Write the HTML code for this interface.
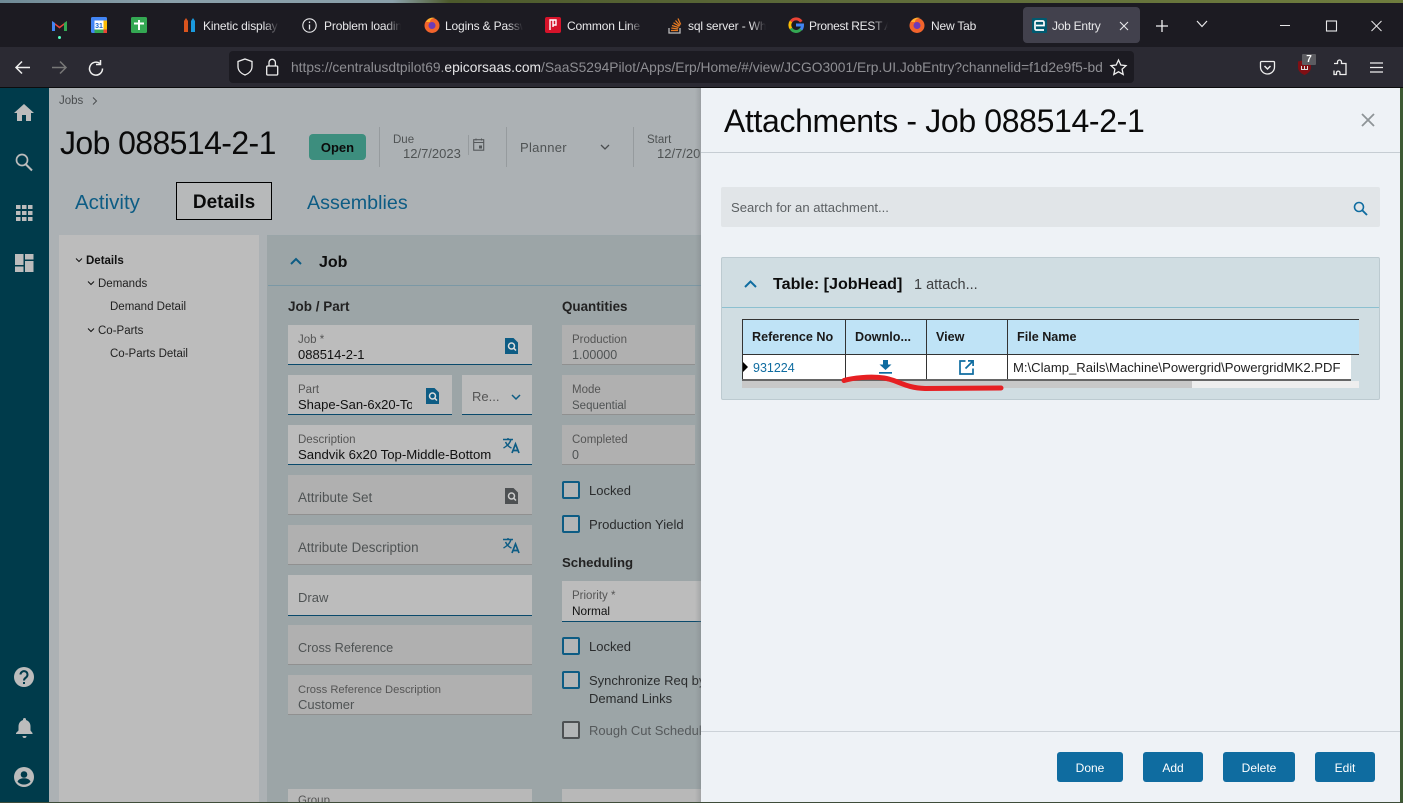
<!DOCTYPE html>
<html><head><meta charset="utf-8"><style>
html,body{margin:0;padding:0;width:1403px;height:803px;overflow:hidden;background:#3a4a30;font-family:"Liberation Sans",sans-serif}
.b{position:absolute}
.t{position:absolute;white-space:nowrap;line-height:16px;font-size:13px}
.f{position:absolute;background:#bcbcbc;border-bottom:1px solid #0a4a6c;box-sizing:border-box}
.d{position:absolute;background:#b0b0b0;border-bottom:1px solid #909090;box-sizing:border-box}
.l{color:#555;font-size:11.500px;margin-top:1px}
.g{color:#4f5354}
.c{position:absolute;width:14px;height:14px;border:2px solid #0d5c84;border-radius:2px;background:#b2b5b6}
.tab{color:#e8e8ea;font-size:12px;overflow:hidden;height:16px;letter-spacing:-.15px;-webkit-mask-image:linear-gradient(90deg,#000 80%,transparent);mask-image:linear-gradient(90deg,#000 80%,transparent)}
.btn{position:absolute;top:752px;height:30px;background:#0f6ca0;border-radius:3px;color:#fff;font-size:12px;line-height:32px;text-align:center}
svg{position:absolute;overflow:visible}
.h{position:absolute;top:320px;height:34px;background:#bfe3f6;font-weight:bold;font-size:12.600px;line-height:35px;color:#1a1a1a;box-sizing:border-box;padding-left:9px;white-space:nowrap}
</style></head><body>
<!-- wallpaper -->
<div class="b" style="left:0;top:0;width:1403px;height:3px;background:linear-gradient(90deg,#6f8a96 0,#8aa0aa 12%,#8aa0aa 28%,#4d5a2c 32%,#5d6a3a 60%,#6f7d3e 100%)"></div>
<div class="b" style="left:1400px;top:88px;width:3px;height:715px;background:#3e5a34"></div>
<div class="b" style="left:0;top:802px;width:1403px;height:1px;background:#3f4d3a"></div>
<!-- tab bar -->
<div class="b" style="left:0;top:3px;width:1403px;height:44px;background:#1c1b22"></div>
<div class="b" style="left:0;top:47px;width:1403px;height:40px;background:#2b2a33"></div>
<div class="b" style="left:0;top:87px;width:1403px;height:1px;background:#0c0c0e"></div>
<div class="b" style="left:1023px;top:7px;width:117px;height:36px;background:#42414d;border-radius:4px"></div>
<!-- tab icons -->
<svg style="left:52px;top:20px" width="15" height="11" viewBox="0 0 15 11"><path d="M0 11V1l7.500 5.500L15 1v10h-3V5L7.500 8.500 3 5v6z" fill="#e8453c"/><path d="M0 11V1l3 2v8z" fill="#4285f4"/><path d="M15 11V1l-3 2v8z" fill="#34a853"/></svg>
<div class="b" style="left:58px;top:36px;width:3px;height:3px;border-radius:50%;background:#54ffbd"></div>
<svg style="left:91px;top:17px" width="16" height="16"><rect width="16" height="16" rx="1.500" fill="#4285f4"/><rect x="3.500" y="3.500" width="9" height="9" fill="#fff"/><rect x="12.500" y="3.500" width="3.500" height="9" fill="#fbbc04"/><rect x="3.500" y="12.500" width="9" height="3.500" fill="#34a853"/><rect x="12.500" y="12.500" width="3.500" height="3.500" fill="#ea4335"/><text x="8" y="11" font-size="7" font-weight="bold" fill="#1967d2" text-anchor="middle" font-family="Liberation Sans">31</text></svg>
<svg style="left:131px;top:17px" width="16" height="16"><rect width="16" height="16" rx="1.500" fill="#34a853"/><path d="M8 3v10M3 6.500h10" stroke="#fff" stroke-width="2"/></svg>
<svg style="left:183px;top:17px" width="14" height="17"><path d="M1 4l2-3 2 3v11H1z" fill="#d9541e"/><path d="M8 4l2-3 2 3v11H8z" fill="#1a9ade"/></svg>
<div class="t tab" style="left:203px;top:18px;width:76px">Kinetic display</div>
<svg style="left:302px;top:18px" width="15" height="15"><circle cx="7.500" cy="7.500" r="6.700" fill="none" stroke="#e8e8ea" stroke-width="1.100"/><path d="M7.500 6.500v5M7.500 3.500v1.500" stroke="#e8e8ea" stroke-width="1.300"/></svg>
<div class="t tab" style="left:324px;top:18px;width:77px">Problem loading</div>
<svg style="left:424px;top:17px" width="16" height="16"><circle cx="8" cy="8.500" r="7.500" fill="#f2642c"/><path d="M2 5C4 1 8 0 11 1 8 1 6 3 6 5" fill="#ffb02e"/><circle cx="8" cy="8.500" r="3.500" fill="#6d3bb8"/></svg>
<div class="t tab" style="left:445px;top:18px;width:78px">Logins &amp; Passw</div>
<svg style="left:545px;top:17px" width="16" height="16"><rect width="16" height="16" rx="2" fill="#d6132a"/><path d="M5 13V3h6v5H8M8 3v7" fill="none" stroke="#fff" stroke-width="1.400"/></svg>
<div class="t tab" style="left:567px;top:18px;width:76px">Common Line</div>
<svg style="left:668px;top:17px" width="14" height="17"><path d="M1 11v5h11v-5" fill="none" stroke="#bbb" stroke-width="1.300"/><path d="M3 13.500h7M3.300 11l6.800 1M4 8.500l6.500 2M5.500 5.800l6 3.500M7.500 3.500l4.500 5M10 1.500l2.700 6" stroke="#e67a22" stroke-width="1.300"/></svg>
<div class="t tab" style="left:688px;top:18px;width:78px">sql server - Wh</div>
<svg style="left:788px;top:17px" width="16" height="16" viewBox="0 0 16 16"><path d="M13.300 4.800A6 6 0 0 0 3 4.700" fill="none" stroke="#ea4335" stroke-width="3"/><path d="M3 4.500A6 6 0 0 0 3 11.500" fill="none" stroke="#fbbc05" stroke-width="3"/><path d="M3 11.500A6 6 0 0 0 13 12" fill="none" stroke="#34a853" stroke-width="3"/><path d="M8 8h6.500c0 2-.5 3.500-1.500 4.500" fill="none" stroke="#4285f4" stroke-width="3"/></svg>
<div class="t tab" style="left:809px;top:18px;width:79px;letter-spacing:-.3px">Pronest REST A</div>
<svg style="left:909px;top:17px" width="16" height="16"><circle cx="8" cy="8.500" r="7.500" fill="#f2642c"/><path d="M2 5C4 1 8 0 11 1 8 1 6 3 6 5" fill="#ffb02e"/><circle cx="8" cy="8.500" r="3.500" fill="#6d3bb8"/></svg>
<div class="t" style="left:931px;top:18px;color:#e8e8ea;font-size:12px;letter-spacing:-.2px">New Tab</div>
<div class="b" style="left:1032px;top:18px;width:15px;height:15px;background:#005a70;border-radius:1px"></div>
<svg style="left:1034px;top:20px" width="11" height="11"><path d="M10 10H2.500Q1 10 1 8.500V2.500Q1 1 2.500 1H8.500Q10 1 10 2.500V5.500H2" fill="none" stroke="#fff" stroke-width="1.700"/></svg>
<div class="t" style="left:1052px;top:18px;color:#e8e8ea;font-size:12px;letter-spacing:-.25px">Job Entry</div>
<svg style="left:1119px;top:21px" width="10" height="10"><path d="M1 1l8 8M9 1l-8 8" stroke="#e8e8ea" stroke-width="1.100"/></svg>
<svg style="left:1156px;top:20px" width="12" height="12"><path d="M6 0v12M0 6h12" stroke="#f0f0f2" stroke-width="1.300"/></svg>
<svg style="left:1196px;top:20px" width="12" height="8"><path d="M1 1l5 5.500L11 1" fill="none" stroke="#e8e8ea" stroke-width="1.200"/></svg>
<svg style="left:1280px;top:20px" width="103" height="12"><path d="M0 5.500h10" stroke="#e8e8ea"/><rect x="46.500" y="1" width="10" height="10" fill="none" stroke="#e8e8ea" stroke-width="1.100"/><path d="M91.500 1l10 10M101.500 1l-10 10" stroke="#e8e8ea"/></svg>
<!-- toolbar -->
<div class="b" style="left:229px;top:51px;width:905px;height:32px;background:#1c1b22;border-radius:4px"></div>
<svg style="left:15px;top:60px" width="90" height="16" fill="none"><path d="M1 7.500h14M7 1.500l-6 6 6 6" stroke="#eee" stroke-width="1.500"/><path d="M37 7.500h14M45 1.500l6 6-6 6" stroke="#777" stroke-width="1.500"/><path d="M85 3.500a6.500 6.500 0 1 0 2.500 5" stroke="#eee" stroke-width="1.500"/><path d="M85.500 0v4.500h-4.500" stroke="#eee" stroke-width="1.500"/></svg>
<svg style="left:237px;top:58px" width="44" height="18" fill="none"><path d="M8 1l7 2.500v5c0 4-3 7-7 8.500-4-1.500-7-4.500-7-8.500v-5z" stroke="#eee" stroke-width="1.300"/><rect x="29.700" y="8" width="11" height="9" rx="1" stroke="#eee" stroke-width="1.300"/><path d="M32 8V4.500a3.200 3.200 0 0 1 6.400 0V8" stroke="#eee" stroke-width="1.300"/></svg>
<div class="t" style="left:291px;top:60px;font-size:13.800px;color:#8e8e93;width:812px;overflow:hidden">https://centralusdtpilot69.<span style="color:#e6e6e8">epicorsaas.com</span>/SaaS5294Pilot/Apps/Erp/Home/#/view/JCGO3001/Erp.UI.JobEntry?channelid=f1d2e9f5-bd</div>
<svg style="left:1110px;top:59px" width="17" height="17"><path d="M8.500 1l2.300 5 5.200.6-3.900 3.600 1.100 5.300-4.700-2.700-4.700 2.700 1.100-5.300L1 6.600 6.200 6z" fill="none" stroke="#eee" stroke-width="1.300"/></svg>
<svg style="left:1260px;top:60px" width="15" height="15"><path d="M1.500 1.500h12a1 1 0 0 1 1 1V7a7 7 0 0 1-14 0V2.500a1 1 0 0 1 1-1z" fill="none" stroke="#eee" stroke-width="1.300"/><path d="M4.500 6l3 3 3-3" fill="none" stroke="#eee" stroke-width="1.500"/></svg>
<svg style="left:1298px;top:60px" width="13" height="15"><path d="M0 1.500L6.500 0 13 1.500v6c0 3.500-3 6-6.500 7.500C3 13.500 0 11 0 7.500z" fill="#800f14"/><path d="M3.500 6v3.500h6V6M6.500 6v3.500" fill="none" stroke="#ddd"/></svg>
<div class="b" style="left:1302px;top:54px;width:14px;height:11px;background:#5c5c61;border-radius:1px;color:#fff;font-size:10px;font-weight:bold;line-height:11px;text-align:center">7</div>
<svg style="left:1333px;top:59px" width="15" height="17"><path d="M1 4.500h3.500V3a2 2 0 0 1 4 0v1.500H13v11H7v-2a1.800 1.800 0 0 0-3.500 0v2H1v-4" fill="none" stroke="#eee" stroke-width="1.300"/></svg>
<svg style="left:1370px;top:62px" width="13" height="11"><path d="M0 1h13M0 5.500h13M0 10h13" stroke="#eee" stroke-width="1.300"/></svg>
<!-- sidebar -->
<div class="b" style="left:0;top:88px;width:49px;height:714px;background:#003b4b"></div>
<svg style="left:14px;top:104px" width="20" height="18"><path d="M8 17v-6h4v6h5V9h3L10 0 0 9h3v8z" fill="#bcbcbc"/></svg>
<svg style="left:15px;top:153px" width="18" height="19" fill="none"><circle cx="7" cy="7" r="5.500" stroke="#bcbcbc" stroke-width="1.700"/><path d="M11 11.500l6 6" stroke="#bcbcbc" stroke-width="2"/></svg>
<svg style="left:16px;top:205px" width="17" height="16" fill="#bcbcbc"><rect width="4.500" height="4"/><rect x="6" width="4.500" height="4"/><rect x="12" width="4.500" height="4"/><rect y="6" width="4.500" height="4"/><rect x="6" y="6" width="4.500" height="4"/><rect x="12" y="6" width="4.500" height="4"/><rect y="12" width="4.500" height="4"/><rect x="6" y="12" width="4.500" height="4"/><rect x="12" y="12" width="4.500" height="4"/></svg>
<svg style="left:15px;top:254px" width="19" height="18" fill="#bcbcbc"><rect width="8.500" height="11"/><rect y="12.500" width="8.500" height="5.500"/><rect x="10" width="8.500" height="5.500"/><rect x="10" y="7" width="8.500" height="11"/></svg>
<svg style="left:14px;top:667px" width="20" height="20"><circle cx="10" cy="10" r="10" fill="#bcbcbc"/><path d="M6.500 7.500a3.500 3.500 0 1 1 5.500 3c-1.300.9-2 1.500-2 3" fill="none" stroke="#003b4b" stroke-width="2"/><rect x="9" y="15" width="2" height="2" fill="#003b4b"/></svg>
<svg style="left:16px;top:717px" width="17" height="21" fill="#bcbcbc"><path d="M8.500 1a1.500 1.500 0 0 1 1.500 1.500v.5c3 1 4.500 3.500 4.500 6.500v4l2 2.500v1H0v-1L2.500 13.500v-4C2.500 6.500 4 4 7 3v-.5A1.500 1.500 0 0 1 8.500 1z"/><path d="M6.500 19h4a2 2 0 0 1-4 0z"/></svg>
<svg style="left:14px;top:767px" width="20" height="20"><circle cx="10" cy="10" r="10" fill="#bcbcbc"/><circle cx="10" cy="7.500" r="3.300" fill="#003b4b"/><path d="M3.500 14.500c1-2.500 4-3.300 6.500-3.300s5.500.8 6.500 3.300c-1.500 2-4 3-6.500 3s-5-1-6.500-3z" fill="#003b4b"/></svg>
<!-- main -->
<div class="b" style="left:49px;top:88px;width:652px;height:714px;background:#acb1b4"></div>
<div class="t" style="left:59px;top:93px;font-size:11.500px;color:#4a4d4f">Jobs</div>
<svg style="left:92px;top:97px" width="6" height="8"><path d="M1 .5L4.500 4 1 7.500" fill="none" stroke="#4a4d4f"/></svg>
<div class="t" style="left:60px;top:125px;font-size:32px;line-height:37px;color:#0a0a0a;letter-spacing:-.6px">Job 088514-2-1</div>
<div class="b" style="left:309px;top:134px;width:57px;height:26px;background:#3d8e7e;border-radius:4px;color:#0b0b0b;font-weight:bold;font-size:13px;line-height:27px;text-align:center">Open</div>
<div class="b" style="left:379px;top:127px;width:1px;height:40px;background:#969b9e"></div>
<div class="t g" style="left:393px;top:132px;font-size:11.500px">Due</div>
<div class="t g" style="left:403px;top:146px;font-size:13px">12/7/2023</div>
<div class="b" style="left:468px;top:135px;width:1px;height:20px;background:#969b9e"></div>
<svg style="left:473px;top:138px" width="12" height="13" fill="none"><rect x=".7" y="1.700" width="10" height="10.500" stroke="#55595b" stroke-width="1.100"/><path d="M.7 4.500h10M3 .5v2M8.500.5v2" stroke="#55595b"/><rect x="6" y="7.500" width="3" height="3" fill="#55595b"/></svg>
<div class="b" style="left:506px;top:127px;width:1px;height:40px;background:#969b9e"></div>
<div class="t g" style="left:520px;top:140px;font-size:13px;letter-spacing:.3px">Planner</div>
<svg style="left:600px;top:144px" width="10" height="7"><path d="M1 1l4 4 4-4" fill="none" stroke="#4a4d4f" stroke-width="1.300"/></svg>
<div class="b" style="left:633px;top:127px;width:1px;height:40px;background:#969b9e"></div>
<div class="t g" style="left:647px;top:132px;font-size:11.500px">Start</div>
<div class="t g" style="left:657px;top:146px;font-size:13px;width:44px;overflow:hidden">12/7/2023</div>
<div class="t" style="left:75px;top:190px;font-size:20.500px;line-height:26px;color:#0d5c84">Activity</div>
<div class="b" style="left:176px;top:182px;width:96px;height:38px;box-sizing:border-box;border:1px solid #000;background:#b7b9ba;color:#0a0a0a;font-weight:bold;font-size:19px;line-height:39px;text-align:center">Details</div>
<div class="t" style="left:307px;top:190px;font-size:19.700px;line-height:26px;color:#0d5c84">Assemblies</div>
<!-- tree -->
<div class="b" style="left:59px;top:235px;width:200px;height:567px;background:#bcbcbc"></div>
<svg style="left:76px;top:258px;" width="40" height="80" fill="none" stroke="#111"><path d="M0 .5l3 3 3-3"/><path d="M12 23.500l3 3 3-3"/><path d="M12 70.500l3 3 3-3"/></svg>
<div class="t" style="left:86px;top:253px;font-size:11.500px;font-weight:bold;color:#111">Details</div>
<div class="t" style="left:98px;top:276px;font-size:11.500px;color:#222">Demands</div>
<div class="t" style="left:110px;top:299px;font-size:11.500px;color:#222">Demand Detail</div>
<div class="t" style="left:98px;top:323px;font-size:11.500px;color:#222">Co-Parts</div>
<div class="t" style="left:110px;top:346px;font-size:11.500px;color:#222">Co-Parts Detail</div>
<!-- form panel -->
<div class="b" style="left:267px;top:235px;width:434px;height:567px;background:#9ca5a7;border-top:1px solid #9aa5a8;box-sizing:border-box"></div>
<div class="b" style="left:268px;top:285px;width:433px;height:1px;background:#7b98a5"></div>
<svg style="left:290px;top:257px" width="12" height="8"><path d="M1 7l5-5 5 5" fill="none" stroke="#0d5c84" stroke-width="2"/></svg>
<div class="t" style="left:319px;top:254px;font-size:16px;line-height:18px;font-weight:bold;color:#0d0d0d">Job</div>
<div class="t" style="left:288px;top:299px;font-size:13.500px;font-weight:bold;color:#222">Job / Part</div>
<div class="t" style="left:562px;top:299px;font-size:13.400px;font-weight:bold;color:#222">Quantities</div>
<div class="f" style="left:288px;top:325px;width:244px;height:40px"></div>
<div class="t l" style="left:298px;top:331px">Job *</div>
<div class="t" style="left:298px;top:347px;color:#111;font-size:13px">088514-2-1</div>
<svg style="left:505px;top:338px" width="13" height="16"><path d="M0 0h8.500L13 4.500V16H0z" fill="#0d5c84"/><circle cx="6.500" cy="8" r="3" fill="none" stroke="#ddd" stroke-width="1.500"/><path d="M8.700 10.200L11 12.500" stroke="#ddd" stroke-width="1.500"/></svg>
<div class="f" style="left:288px;top:375px;width:164px;height:40px"></div>
<div class="t l" style="left:298px;top:381px">Part</div>
<div class="t" style="left:298px;top:397px;color:#111;font-size:13px;width:114px;overflow:hidden">Shape-San-6x20-Top</div>
<svg style="left:426px;top:388px" width="13" height="16"><path d="M0 0h8.500L13 4.500V16H0z" fill="#0d5c84"/><circle cx="6.500" cy="8" r="3" fill="none" stroke="#ddd" stroke-width="1.500"/><path d="M8.700 10.200L11 12.500" stroke="#ddd" stroke-width="1.500"/></svg>
<div class="f" style="left:462px;top:375px;width:70px;height:40px"></div>
<div class="t" style="left:472px;top:389px;color:#555;font-size:13px">Re...</div>
<svg style="left:511px;top:394px" width="10" height="7"><path d="M1 1l4 4 4-4" fill="none" stroke="#0d5c84" stroke-width="1.500"/></svg>
<div class="f" style="left:288px;top:425px;width:244px;height:40px"></div>
<div class="t l" style="left:298px;top:431px">Description</div>
<div class="t" style="left:298px;top:447px;color:#111;font-size:13.200px">Sandvik 6x20 Top-Middle-Bottom</div>
<svg style="left:503px;top:438px" width="18" height="16" fill="none" stroke="#0d5c84" stroke-width="1.400"><path d="M0 1.500h10M5 0v1.500M8 1.500C7 5 4 8 .5 10M2.500 4C4 7 6 9 8.500 10"/><path d="M9 15l3.500-9 3.500 9M10 12.500h5" stroke-width="1.700"/></svg>
<div class="d" style="left:288px;top:475px;width:244px;height:40px"></div>
<div class="t g" style="left:298px;top:490px;font-size:13.500px">Attribute Set</div>
<svg style="left:505px;top:488px" width="13" height="16"><path d="M0 0h8.500L13 4.500V16H0z" fill="#4d5052"/><circle cx="6.500" cy="8" r="3" fill="none" stroke="#ccc" stroke-width="1.500"/><path d="M8.700 10.200L11 12.500" stroke="#ccc" stroke-width="1.500"/></svg>
<div class="d" style="left:288px;top:525px;width:244px;height:40px"></div>
<div class="t g" style="left:298px;top:540px;font-size:13.400px">Attribute Description</div>
<svg style="left:503px;top:538px" width="18" height="16" fill="none" stroke="#0d5c84" stroke-width="1.400"><path d="M0 1.500h10M5 0v1.500M8 1.500C7 5 4 8 .5 10M2.500 4C4 7 6 9 8.500 10"/><path d="M9 15l3.500-9 3.500 9M10 12.500h5" stroke-width="1.700"/></svg>
<div class="f" style="left:288px;top:575px;width:244px;height:41px"></div>
<div class="t g" style="left:298px;top:590px">Draw</div>
<div class="d" style="left:288px;top:625px;width:244px;height:40px"></div>
<div class="t g" style="left:298px;top:640px;font-size:12.700px">Cross Reference</div>
<div class="d" style="left:288px;top:675px;width:244px;height:40px"></div>
<div class="t l" style="left:298px;top:681px;font-size:11.200px">Cross Reference Description</div>
<div class="t g" style="left:298px;top:697px">Customer</div>
<div class="b" style="left:288px;top:789px;width:244px;height:13px;background:#b8b8b8"></div>
<div class="t l" style="left:298px;top:794px;height:8px;overflow:hidden;line-height:14px;margin-top:0">Group</div>
<div class="d" style="left:562px;top:325px;width:133px;height:40px;background:#b0b0b0"></div>
<div class="t l" style="left:572px;top:331px">Production</div>
<div class="t g" style="left:572px;top:347px;font-size:12.500px">1.00000</div>
<div class="d" style="left:562px;top:375px;width:133px;height:40px"></div>
<div class="t l" style="left:572px;top:381px">Mode</div>
<div class="t g" style="left:572px;top:398px;font-size:11.500px">Sequential</div>
<div class="d" style="left:562px;top:425px;width:133px;height:40px"></div>
<div class="t l" style="left:572px;top:431px">Completed</div>
<div class="t g" style="left:572px;top:447px;font-size:12.500px">0</div>
<div class="c" style="left:562px;top:481px"></div>
<div class="t" style="left:589px;top:483px;color:#2a2c2d">Locked</div>
<div class="c" style="left:562px;top:515px"></div>
<div class="t" style="left:589px;top:517px;color:#2a2c2d;font-size:13.100px">Production Yield</div>
<div class="t" style="left:562px;top:555px;font-size:13.200px;font-weight:bold;color:#222">Scheduling</div>
<div class="f" style="left:562px;top:581px;width:139px;height:41px"></div>
<div class="t l" style="left:572px;top:587px">Priority *</div>
<div class="t" style="left:572px;top:603px;font-size:11.800px;color:#111">Normal</div>
<div class="c" style="left:562px;top:637px"></div>
<div class="t" style="left:589px;top:639px;color:#2a2c2d">Locked</div>
<div class="c" style="left:562px;top:671px"></div>
<div class="t" style="left:589px;top:673px;color:#2a2c2d;width:112px;overflow:hidden">Synchronize Req by</div>
<div class="t" style="left:589px;top:691px;color:#2a2c2d">Demand Links</div>
<div class="c" style="left:562px;top:721px;border-color:#4d5052"></div>
<div class="t" style="left:589px;top:723px;color:#55595b;width:112px;overflow:hidden">Rough Cut Scheduling</div>
<div class="b" style="left:562px;top:789px;width:139px;height:13px;background:#b8b8b8"></div>
<!-- modal -->
<div class="b" style="left:701px;top:88px;width:699px;height:714px;background:#eef2f6"></div>
<div class="b" style="left:695px;top:88px;width:6px;height:714px;background:linear-gradient(90deg,rgba(120,125,128,0),rgba(120,125,128,.35))"></div>
<div class="t" style="left:724px;top:103px;font-size:32px;line-height:37px;color:#0a0a0a;letter-spacing:-.36px">Attachments - Job 088514-2-1</div>
<svg style="left:1361px;top:113px" width="14" height="14"><path d="M1 1l12 12M13 1L1 13" stroke="#8e9497" stroke-width="1.800"/></svg>
<div class="b" style="left:701px;top:152px;width:699px;height:1px;background:#c6cdd3"></div>
<div class="b" style="left:721px;top:187px;width:659px;height:40px;background:#e1e5e8;border-radius:2px"></div>
<div class="t" style="left:731px;top:200px;font-size:13.100px;color:#5c6063">Search for an attachment...</div>
<svg style="left:1353px;top:201px" width="15" height="15" fill="none"><circle cx="6" cy="6" r="4.500" stroke="#0f6ca0" stroke-width="1.600"/><path d="M9.500 9.500l4.500 4.500" stroke="#0f6ca0" stroke-width="1.900"/></svg>
<div class="b" style="left:721px;top:257px;width:659px;height:143px;background:#d0dde2;border:1px solid #bccad0;box-sizing:border-box;border-radius:2px"></div>
<div class="b" style="left:722px;top:307px;width:657px;height:1px;background:#8cc0d0"></div>
<svg style="left:744px;top:280px" width="13" height="8"><path d="M1 7l5.500-5.500L12 7" fill="none" stroke="#0f6ca0" stroke-width="2"/></svg>
<div class="t" style="left:773px;top:275px;font-size:16.100px;line-height:18px;font-weight:bold;color:#0d0d0d">Table: [JobHead]</div>
<div class="t" style="left:914px;top:277px;font-size:14.500px;color:#3d3f41">1 attach...</div>
<!-- table -->
<div class="b" style="left:742px;top:319px;width:617px;height:1px;background:#333"></div>
<div class="h" style="left:743px;width:102px">Reference No</div>
<div class="h" style="left:846px;width:80px">Downlo...</div>
<div class="h" style="left:927px;width:80px">View</div>
<div class="h" style="left:1008px;width:351px">File Name</div>
<div class="b" style="left:742px;top:354px;width:617px;height:1px;background:#333"></div>
<div class="b" style="left:742px;top:355px;width:609px;height:24px;background:#fff"></div>
<div class="b" style="left:742px;top:320px;width:1px;height:59px;background:#333"></div>
<div class="b" style="left:845px;top:320px;width:1px;height:59px;background:#333"></div>
<div class="b" style="left:926px;top:320px;width:1px;height:59px;background:#333"></div>
<div class="b" style="left:1007px;top:320px;width:1px;height:59px;background:#333"></div>
<div class="b" style="left:742px;top:379px;width:609px;height:2px;background:#666"></div>
<div class="b" style="left:742px;top:381px;width:617px;height:7px;background:#eee"></div>
<div class="b" style="left:742px;top:381px;width:450px;height:7px;background:#c8c8c8"></div>
<svg style="left:743px;top:362px" width="5" height="10"><path d="M0 0l5 5-5 5z" fill="#000"/></svg>
<div class="t" style="left:753px;top:360px;font-size:12.500px;color:#0f6ca0">931224</div>
<svg style="left:879px;top:360px" width="13" height="14" fill="#0f6ca0"><path d="M4 0h5v4.500h3.500L6.500 10 .5 4.500H4z"/><rect y="12" width="13" height="1.700"/></svg>
<svg style="left:959px;top:360px" width="15" height="15" fill="none" stroke="#0f6ca0" stroke-width="1.700"><path d="M6.500 1H1v13h13V8.500"/><path d="M9 .9h5.100V6M14 1L6.500 8.500"/></svg>
<div class="t" style="left:1013px;top:360px;font-size:13.100px;color:#222">M:\Clamp_Rails\Machine\Powergrid\PowergridMK2.PDF</div>
<svg style="left:0;top:0" width="1403" height="803"><path d="M844 380.500C852 378 870 376 884 378C898 380 905 388 925 388.500L1001 388" fill="none" stroke="#e61f22" stroke-width="5" stroke-linecap="round"/></svg>
<!-- footer -->
<div class="b" style="left:701px;top:731px;width:699px;height:1px;background:#ccd2d8"></div>
<div class="btn" style="left:1057px;width:66px">Done</div>
<div class="btn" style="left:1143px;width:60px">Add</div>
<div class="btn" style="left:1223px;width:72px">Delete</div>
<div class="btn" style="left:1315px;width:60px">Edit</div>
</body></html>
